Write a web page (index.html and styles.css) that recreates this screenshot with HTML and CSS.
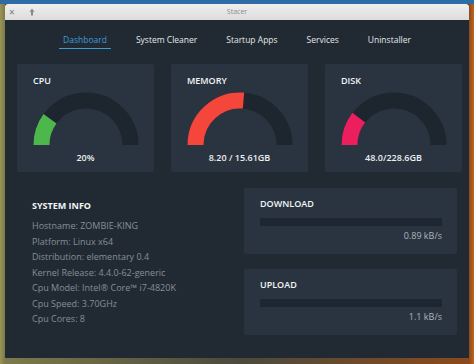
FILE: index.html
```html
<!DOCTYPE html>
<html lang="en">
<head>
    <meta charset="UTF-8">
    <title>Stacer</title>
    <link rel="stylesheet" href="styles.css">
</head>
<body>
<div class="window">
    <div class="titlebar">
        <span class="tb-close">&times;</span>
        <svg class="tb-pin" width="6" height="8" viewBox="0 0 6 8">
            <path d="M3 0.5 L5.5 4 L4 4 L4 7.5 L2 7.5 L2 4 L0.5 4 Z" fill="#8a8a8a"/>
        </svg>
        <span class="tb-title">Stacer</span>
    </div>
    <div class="content">
        <div class="nav">
            <span class="tab active">Dashboard</span>
            <span class="tab">System Cleaner</span>
            <span class="tab">Startup Apps</span>
            <span class="tab">Services</span>
            <span class="tab">Uninstaller</span>
        </div>

        <div class="gauges">
            <div class="card gauge-card">
                <div class="card-title">CPU</div>
                <svg class="gauge" width="106" height="53" viewBox="0 0 106 53">
                    <path class="track" d="M 8.5 53 A 44.5 44.5 0 0 1 97.5 53"/>
                    <path d="M 8.5 53 A 44.5 44.5 0 0 1 17 26.8" stroke="#4cb84b"/>
                </svg>
                <div class="gauge-value">20%</div>
            </div>
            <div class="card gauge-card">
                <div class="card-title">MEMORY</div>
                <svg class="gauge" width="106" height="53" viewBox="0 0 106 53">
                    <path class="track" d="M 8.5 53 A 44.5 44.5 0 0 1 97.5 53"/>
                    <path d="M 8.5 53 A 44.5 44.5 0 0 1 56.5 8.6" stroke="#f4463a"/>
                </svg>
                <div class="gauge-value">8.20 / 15.61GB</div>
            </div>
            <div class="card gauge-card">
                <div class="card-title">DISK</div>
                <svg class="gauge" width="106" height="53" viewBox="0 0 106 53">
                    <path class="track" d="M 8.5 53 A 44.5 44.5 0 0 1 97.5 53"/>
                    <path d="M 8.5 53 A 44.5 44.5 0 0 1 17.8 25.7" stroke="#ec1f5e"/>
                </svg>
                <div class="gauge-value">48.0/228.6GB</div>
            </div>
        </div>

        <div class="bottom">
            <div class="sysinfo">
                <div class="card-title">SYSTEM INFO</div>
                <ul class="info-list">
                    <li>Hostname: ZOMBIE-KING</li>
                    <li>Platform: Linux x64</li>
                    <li>Distribution: elementary 0.4</li>
                    <li>Kernel Release: 4.4.0-62-generic</li>
                    <li>Cpu Model: Intel® Core™ i7-4820K</li>
                    <li>Cpu Speed: 3.70GHz</li>
                    <li>Cpu Cores: 8</li>
                </ul>
            </div>
            <div class="network">
                <div class="card net-card">
                    <div class="card-title">DOWNLOAD</div>
                    <div class="bar"></div>
                    <div class="net-value">0.89 kB/s</div>
                </div>
                <div class="card net-card">
                    <div class="card-title">UPLOAD</div>
                    <div class="bar"></div>
                    <div class="net-value">1.1 kB/s</div>
                </div>
            </div>
        </div>
    </div>
</div>
</body>
</html>
```

FILE: styles.css
```css
html, body {
    margin: 0;
    height: 100%;
}

body {
    font-family: "Open Sans", "Noto Sans", sans-serif;
    background:
        linear-gradient(to bottom, #2d6ca4 0, #2d6ca4 4px, transparent 4px),
        linear-gradient(to right, #9a9455 0, #7d7a4a 5px, #4a4a3e 50%, #8a4a1c 469px, #c0651f 100%);
    overflow: hidden;
}

.window {
    margin: 4px 5px 0 5px;
    width: 464px;
    height: 354px;
    background: #212a33;
    display: flex;
    flex-direction: column;
}

.titlebar {
    height: 16px;
    background: linear-gradient(#efefef, #dcdcdc);
    border-radius: 3px 3px 0 0;
    display: flex;
    align-items: center;
    position: relative;
    padding-left: 4px;
}

.tb-close {
    color: #777;
    font-size: 10px;
    line-height: 16px;
    width: 8px;
}

.tb-pin {
    margin-left: 12px;
}

.tb-title {
    position: absolute;
    left: 0;
    right: 0;
    text-align: center;
    font-size: 7px;
    color: #8d8d8d;
    line-height: 16px;
}

.content {
    padding: 0 12px;
}

.nav {
    display: flex;
    justify-content: center;
    gap: 21px;
    padding-top: 13px;
    height: 44px;
    box-sizing: border-box;
}

.tab {
    font-size: 8.5px;
    color: #e3e6e9;
    padding: 0 4px;
    height: 15px;
    line-height: 13px;
}

.tab.active {
    color: #3f9bd6;
    border-bottom: 1.5px solid #3f9bd6;
}

.gauges {
    display: grid;
    grid-template-columns: repeat(3, 1fr);
    gap: 17px;
}

.card {
    background: #2a3440;
    border-radius: 2px;
}

.card-title {
    font-size: 9px;
    font-weight: 600;
    color: #f2f4f6;
    line-height: 12px;
}

.gauge-card {
    height: 108px;
    box-sizing: border-box;
    padding: 11px 15px 0 16px;
    display: flex;
    flex-direction: column;
}

.gauge {
    display: block;
    margin: 5px auto 0 auto;
}

.gauge path {
    fill: none;
    stroke-width: 16;
}

.gauge .track {
    stroke: #1d252e;
}

.gauge-value {
    font-size: 9px;
    font-weight: 600;
    color: #eceef0;
    text-align: center;
    margin-top: 6px;
    margin-left: -1px;
}

.bottom {
    display: grid;
    grid-template-columns: 1fr 213px;
    gap: 17px;
    margin-top: 16px;
}

.sysinfo {
    padding: 12px 0 0 15px;
}

.sysinfo .card-title {
    font-weight: 700;
}

.info-list {
    list-style: none;
    margin: 6px 0 0 0;
    padding: 0;
}

.info-list li {
    font-size: 9px;
    color: #858e97;
    line-height: 15.5px;
}

.network {
    display: flex;
    flex-direction: column;
    gap: 15px;
}

.net-card {
    height: 66px;
    box-sizing: border-box;
    padding: 10px 15px 0 16px;
}

.bar {
    height: 8px;
    background: #1e2731;
    margin-top: 8px;
}

.net-value {
    font-size: 9px;
    color: #aeb5bc;
    text-align: right;
    margin-top: 3px;
}
```
